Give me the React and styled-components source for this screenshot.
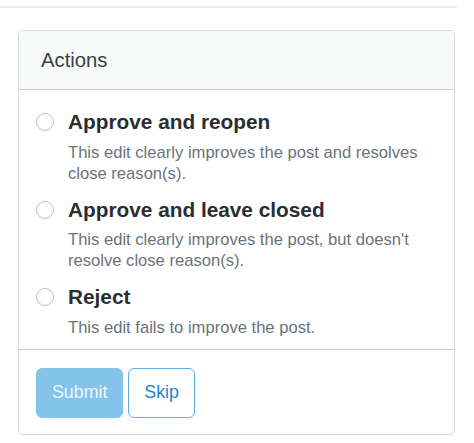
import React, { useState } from "react";
import styled, { createGlobalStyle } from "styled-components";

const GlobalStyle = createGlobalStyle`
  html, body {
    margin: 0;
    padding: 0;
    background: #ffffff;
    font-family: "Liberation Sans", Arial, sans-serif;
  }
`;

const Page = styled.div`
  width: 474px;
  height: 443px;
  padding-top: 6px;
  box-sizing: border-box;
  overflow: hidden;
`;

const Rule = styled.div`
  width: 457px;
  height: 2px;
  background: #eceeef;
`;

const Card = styled.section`
  margin: 22px 0 0 18px;
  width: 437px;
  box-sizing: border-box;
  border: 1px solid #d6d9dc;
  border-radius: 5px;
  overflow: hidden;
`;

const Header = styled.div`
  height: 58px;
  display: flex;
  align-items: center;
  padding-left: 22px;
  background: #f8f9f9;
  border-bottom: 1px solid #c8ccd0;
  font-size: 20.3px;
  color: #3b4045;
`;

const Body = styled.div`
  display: flex;
  flex-direction: column;
  gap: 13px;
  padding: 19px 17px 11px 17px;
  border-bottom: 1px solid #c8ccd0;
`;

const Option = styled.label`
  display: grid;
  grid-template-columns: 18px 1fr;
  column-gap: 14px;
  cursor: pointer;
`;

const Radio = styled.span`
  grid-row: 1;
  align-self: center;
  width: 18px;
  height: 18px;
  box-sizing: border-box;
  border-radius: 50%;
  border: 1px solid #bbc0c4;
  background: ${(p) => (p.checked ? "#0095ff" : "#ffffff")};
  box-shadow: ${(p) => (p.checked ? "inset 0 0 0 4px #ffffff" : "none")};
`;

const Title = styled.span`
  grid-row: 1;
  grid-column: 2;
  font-size: 20.8px;
  line-height: 26px;
  font-weight: 700;
  color: #2a2e31;
`;

const Desc = styled.span`
  grid-row: 2;
  grid-column: 2;
  margin-top: 6.5px;
  font-size: 16.6px;
  line-height: 21px;
  color: #6a737c;
`;

const Footer = styled.div`
  display: flex;
  gap: 5px;
  padding: 18px 17px 16px 17px;
`;

const Button = styled.button`
  height: 50px;
  padding: 0 15px;
  border-radius: 6px;
  font-family: "Liberation Sans", Arial, sans-serif;
  font-size: 17.8px;
  cursor: pointer;
  border: 1px solid ${(p) => (p.primary ? "#84c4ea" : "#5eb0e0")};
  background: ${(p) => (p.primary ? "#84c4ea" : "#ffffff")};
  color: ${(p) => (p.primary ? "#eef7fc" : "#1a86c8")};
  &:disabled {
    cursor: default;
  }
`;

const options = [
  {
    id: "reopen",
    title: "Approve and reopen",
    desc: "This edit clearly improves the post and resolves close reason(s).",
  },
  {
    id: "closed",
    title: "Approve and leave closed",
    desc: "This edit clearly improves the post, but doesn't resolve close reason(s).",
  },
  {
    id: "reject",
    title: "Reject",
    desc: "This edit fails to improve the post.",
  },
];

export default function App() {
  const [choice, setChoice] = useState(null);

  return (
    <Page>
      <GlobalStyle />
      <Rule />
      <Card>
        <Header>Actions</Header>
        <Body>
          {options.map((o) => (
            <Option key={o.id} onClick={() => setChoice(o.id)}>
              <Radio checked={choice === o.id} />
              <Title>{o.title}</Title>
              <Desc>{o.desc}</Desc>
            </Option>
          ))}
        </Body>
        <Footer>
          <Button primary disabled={!choice}>
            Submit
          </Button>
          <Button>Skip</Button>
        </Footer>
      </Card>
    </Page>
  );
}
